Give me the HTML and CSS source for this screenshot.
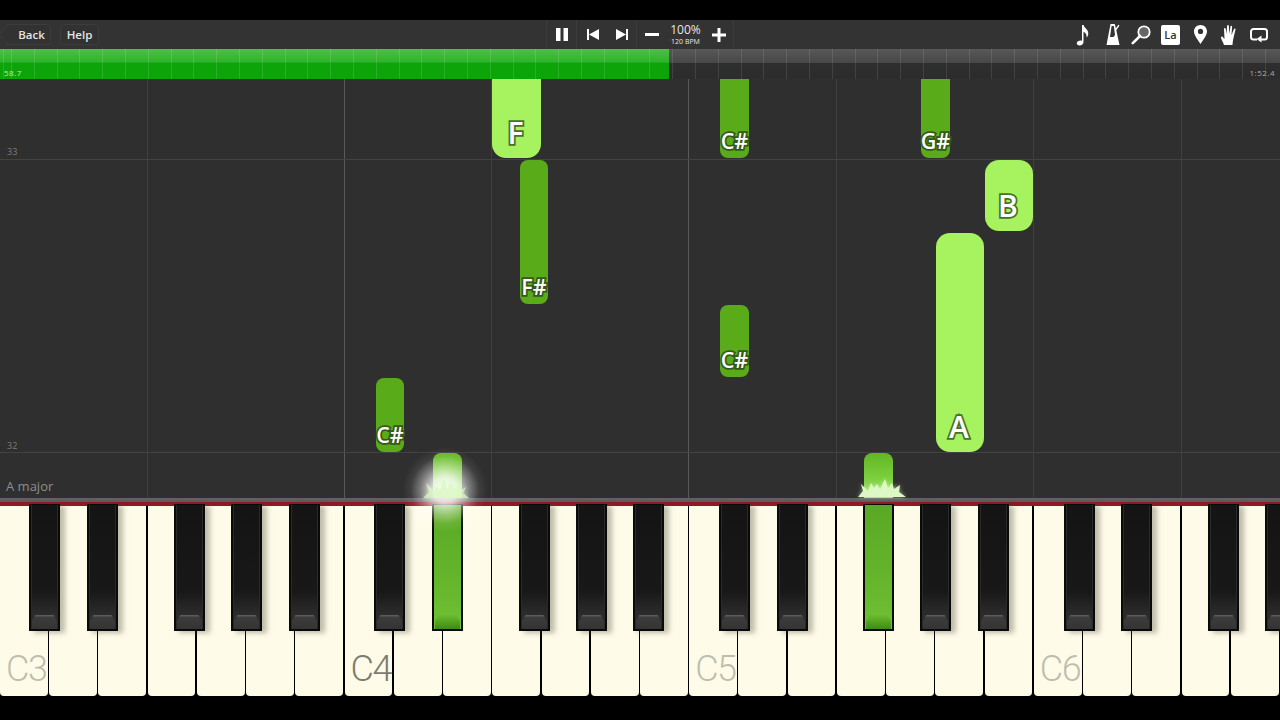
FILE: index.html
```html
<!DOCTYPE html>
<html lang="en">
<head>
<meta charset="utf-8">
<title>Piano roll</title>
<link rel="stylesheet" href="styles.css">
</head>
<body>
<div class="letterbox"></div>
<header class="toolbar">
  <nav class="tb-left">
    <a class="btn btn-back">Back</a>
    <a class="btn">Help</a>
  </nav>
  <div class="tb-center">
    <div class="cell cell-play">
      <svg width="12" height="13" viewBox="0 0 12 13"><path class="ic" d="M0 0h4.500v13H0zM7.500 0H12v13H7.500z"/></svg>
    </div>
    <div class="cell cell-skip">
      <svg width="12" height="11" viewBox="0 0 12 11"><path class="ic" d="M0 0h2v11H0zM12 0v11L2 5.500z"/></svg>
      <svg width="12" height="11" viewBox="0 0 12 11"><path class="ic" d="M10 0h2v11h-2zM0 0v11l10-5.500z"/></svg>
    </div>
    <div class="cell cell-speed">
      <svg width="14" height="3" viewBox="0 0 14 3"><path class="ic" d="M0 0h14v3H0z"/></svg>
      <div class="speed"><span class="pct">100%</span><span class="bpm">120 BPM</span></div>
      <svg width="14" height="14" viewBox="0 0 14 14"><path class="ic" d="M5.500 0h3v5.500H14v3H8.500V14h-3V8.500H0v-3h5.500z"/></svg>
    </div>
  </div>
  <div class="tb-right">
    <svg width="14" height="22" viewBox="0 0 14 22"><path class="ic" d="M6 1h1.600c.3 3 5.400 4.500 4.600 9.500-.3 1.600-1 2.600-1.500 3 .3-3-1.500-5-3.200-5.800V18c0 2.200-2.200 3.600-4.300 3.400C1 21.200.3 19.800 1 18.500c.8-1.500 3-2.300 5-1.700z"/></svg>
    <svg class="i-metro" width="14" height="21" viewBox="0 0 14 21"><path class="ic" d="M4.500 0h4.300l1 4.200L12.500.8l1 .8-3.200 4.700L13.500 21H.5zM5.600 2 4 13h3.500l1.500-2-1.200-9z"/></svg>
    <svg class="i-mag" width="20" height="20" viewBox="0 0 20 20"><circle cx="13" cy="7" r="5.700" fill="#666" stroke="#fff" stroke-width="1.800"/><path d="M9 11 1.800 18.200" stroke="#fff" stroke-width="2.600" stroke-linecap="round"/></svg>
    <span class="la">La</span>
    <svg class="i-pin" width="13" height="19" viewBox="0 0 13 19"><path class="ic" fill-rule="evenodd" d="M6.500 0C10.100 0 13 2.800 13 6.400c0 4-4 8.300-6.500 12.600C4 14.700 0 10.400 0 6.400 0 2.800 2.900 0 6.500 0zm0 3.800a2.600 2.600 0 1 0 0 5.200 2.600 2.600 0 0 0 0-5.200z"/></svg>
    <svg class="i-hand" width="16" height="20" viewBox="0 0 16 20"><path class="ic" d="M3 20c-.6-2.500-3-6-3-7.500 0-1 1-1.200 1.700-.5L3.500 14 3 3.800c0-1.200 1.500-1.200 1.700 0L5.500 9l.6-8c.1-1.300 1.700-1.300 1.800 0L8.200 9l1.300-7.500c.2-1.200 1.700-1 1.600.2L10.500 10l2.500-6c.4-1 1.800-.6 1.500.6L12.500 13c-.6 2.500-.8 4.500-1 7z"/></svg>
    <svg class="i-loop" width="18" height="16" viewBox="0 0 18 16"><path d="M7 12.500H3.500A2.500 2.500 0 0 1 1 10V4.500A2.500 2.500 0 0 1 3.500 2h11A2.500 2.500 0 0 1 17 4.500V10a2.500 2.500 0 0 1-2.500 2.500H10" fill="none" stroke="#fff" stroke-width="2"/><path class="ic" d="M11.500 8.500v7l-5-3.500z"/></svg>
  </div>
</header>
<section class="progress">
  <div class="played"></div>
  <span class="time time-now">58.7</span>
  <span class="time time-total">1:52.4</span>
</section>
<main class="roll">
  <i class="v v1"></i><i class="v v2 strong"></i><i class="v v3"></i><i class="v v4 strong"></i><i class="v v5"></i><i class="v v6"></i><i class="v v7"></i>
  <i class="h h1"></i><i class="h h2"></i>
  <span class="measure m33">33</span>
  <span class="measure m32">32</span>
  <span class="key-sig">A major</span>

  <div class="note light cut n-f"><b>F</b></div>
  <div class="note dark cut n-cs1"><b>C#</b></div>
  <div class="note dark cut n-gs"><b>G#</b></div>
  <div class="note light n-b"><b>B</b></div>
  <div class="note dark n-fs"><b>F#</b></div>
  <div class="note light n-a"><b>A</b></div>
  <div class="note dark n-cs2"><b>C#</b></div>
  <div class="note dark n-cs3"><b>C#</b></div>
  <div class="note playing p1"></div>
  <div class="note playing p2"></div>
</main>
<section class="keyboard">
  <div class="rail"></div>
  <div class="whites">
    <div class="w"><span class="oct pale">C3</span></div><div class="w"></div><div class="w"></div><div class="w"></div><div class="w"></div><div class="w"></div><div class="w"></div>
    <div class="w"><span class="oct">C4</span></div><div class="w"></div><div class="w"></div><div class="w"></div><div class="w"></div><div class="w"></div><div class="w"></div>
    <div class="w"><span class="oct pale">C5</span></div><div class="w"></div><div class="w"></div><div class="w"></div><div class="w"></div><div class="w"></div><div class="w"></div>
    <div class="w"><span class="oct pale">C6</span></div><div class="w"></div><div class="w"></div><div class="w"></div><div class="w"></div>
  </div>
  <div class="b b1"></div><div class="b b2"></div><div class="b b3"></div><div class="b b4"></div><div class="b b5"></div>
  <div class="b b6"></div><div class="b b7 on"></div><div class="b b8"></div><div class="b b9"></div><div class="b b10"></div>
  <div class="b b11"></div><div class="b b12"></div><div class="b b13 on"></div><div class="b b14"></div><div class="b b15"></div>
  <div class="b b16"></div><div class="b b17"></div><div class="b b18"></div><div class="b b19"></div>
</section>
<div class="fx glow"></div>
<svg class="fx spark s1" width="50" height="26" viewBox="0 0 50 26"><path d="M2 25 8 19 5 10 13 18 15 13 19 17 23 4 26 16 30 9 33 16 38 12 39 18 45 14 42 20 48 25z"/></svg>
<svg class="fx spark s2" width="48" height="22" viewBox="0 0 48 22"><path d="M0 21 5 15 3 8 10 15 13 7 16 12 19 8 22 13 27 3 30 12 34 7 36 13 42 9 41 16 48 21z"/></svg>
</body>
</html>
```

FILE: styles.css
```css
* { box-sizing: border-box; }
html, body { margin: 0; height: 720px; overflow: hidden; background: #000; }
body { position: relative; font-family: "Open Sans", "DejaVu Sans", sans-serif; }

.letterbox { height: 20px; background: #000; }

.toolbar {
  height: 29px;
  display: grid;
  grid-template-columns: 1fr auto 1fr;
  background: #333;
  color: #e8e8e8;
}
.tb-left { display: flex; align-items: center; gap: 9px; padding: 4px 0 4px 4px; }
.btn {
  height: 21px;
  width: 39px;
  display: flex;
  align-items: center;
  justify-content: center;
  font-size: 11.500px;
  font-weight: 600;
  color: #e4e4e4;
  border: 1px solid #3c3c3c;
  border-radius: 4px;
  background: #323232;
}
.btn-back { width: 47px; padding-left: 8px; border-left-color: transparent; position: relative; }
.btn-back::before {
  content: "";
  position: absolute;
  left: -4px;
  top: 2px;
  width: 14px;
  height: 14px;
  transform: rotate(45deg);
  border-left: 1px solid #3c3c3c;
  border-bottom: 1px solid #3c3c3c;
}

.tb-center { display: flex; height: 29px; border-left: 1px solid #3c3c3c; }
.cell { display: flex; align-items: center; border-right: 1px solid #3c3c3c; }
.cell-play { width: 30px; padding-left: 9px; }
.cell-skip { width: 60px; padding-left: 10px; gap: 17px; }
.cell-speed { width: 97px; padding-left: 8px; }
.ic { fill: #fff; }
.speed { width: 53px; display: flex; flex-direction: column; align-items: center; color: #e6e6e6; }
.pct { font-size: 12px; line-height: 14px; }
.bpm { font-size: 7px; line-height: 9px; }

.tb-right { display: flex; align-items: center; justify-content: flex-end; padding-right: 12px; }
.i-metro { margin-left: 16px; }
.i-mag { margin-left: 11px; }
.la {
  margin-left: 10px;
  width: 19px;
  height: 20px;
  display: flex;
  align-items: center;
  justify-content: center;
  background: #fff;
  color: #333;
  font-size: 11px;
  font-weight: 600;
  border-radius: 2px;
}
.i-pin { margin-left: 14px; }
.i-hand { margin-left: 14px; }
.i-loop { margin-left: 13px; }

.progress {
  height: 30px;
  position: relative;
  background:
    repeating-linear-gradient(90deg, rgba(255,255,255,.1) 0 1px, transparent 1px 22.8px) 11px 0,
    linear-gradient(#585858 0, #484848 45%, #2e2e2e 48%, #2c2c2c 100%);
}
.played {
  width: 669px;
  height: 30px;
  background:
    repeating-linear-gradient(90deg, rgba(255,255,255,.12) 0 1px, transparent 1px 22.8px) 11px 0,
    linear-gradient(#4cc044 0, #2fb42c 42%, #0da40a 48%, #0da40a 100%);
}
.time { position: absolute; bottom: 1px; font-size: 8px; letter-spacing: .5px; }
.time-now { left: 4px; color: #b9eeb0; }
.time-total { right: 5px; color: #aaa; }

.roll {
  height: 419px;
  position: relative;
  overflow: hidden;
  background: #2f2f2f;
}
.v { position: absolute; top: 0; bottom: 0; width: 1px; background: #3f3f3f; }
.v.strong { background: #5a5a5a; }
.v1 { left: 147px; } .v2 { left: 344px; } .v3 { left: 491px; } .v4 { left: 688px; }
.v5 { left: 836px; } .v6 { left: 1033px; } .v7 { left: 1181px; }
.h { position: absolute; left: 0; right: 0; height: 1px; background: #434343; }
.h1 { top: 80px; } .h2 { top: 373px; }
.measure { position: absolute; left: 7px; font-size: 9px; color: #7c7c7c; }
.m33 { top: 66px; } .m32 { top: 360px; }
.key-sig { position: absolute; left: 6px; top: 398px; font-size: 13px; color: #8d8d8d; }

.note {
  position: absolute;
  display: flex;
  align-items: flex-end;
  justify-content: center;
  border-radius: 8px;
}
.note b {
  font-family: "Open Sans", "DejaVu Sans", sans-serif;
  font-weight: 600;
  color: #fff;
  paint-order: stroke fill;
  -webkit-text-stroke: 3.500px #35591a;
}
.light { background: #a6f25f; border-radius: 14px; }
.light b { font-size: 30px; line-height: 42px; padding: 0 2px 4px 0; -webkit-text-stroke-color: #47702a; }
.dark { background: #5aab19; }
.dark b { font-size: 21.500px; line-height: 30px; padding-bottom: 2px; }
.cut { border-top-left-radius: 0; border-top-right-radius: 0; }

.n-f { left: 492px; top: 0; width: 49px; height: 79px; }
.n-cs1 { left: 720px; top: 0; width: 29px; height: 79px; }
.n-gs { left: 921px; top: 0; width: 29px; height: 79px; }
.n-b { left: 985px; top: 81px; width: 48px; height: 71px; }
.n-fs { left: 520px; top: 81px; width: 28px; height: 144px; }
.n-a { left: 936px; top: 154px; width: 48px; height: 219px; }
.n-cs2 { left: 720px; top: 226px; width: 29px; height: 72px; }
.n-cs3 { left: 376px; top: 299px; width: 28px; height: 74px; }

.playing { top: 374px; width: 29px; height: 45px; background: linear-gradient(#62b624, #7ccf3c 55%, #9ce070); border-radius: 8px 8px 0 0; }
.p1 { left: 433px; }
.p2 { left: 864px; }

.keyboard {
  height: 198px;
  position: relative;
}
.rail { height: 8px; background: linear-gradient(#636363 0, #5a5a5a 4px, #8e1a26 4px, #8e1a26 100%); }
.whites { height: 190px; display: grid; grid-template-columns: repeat(26, 1fr); background: #000; }
.w {
  position: relative;
  margin-right: 1.500px;
  background: #fefce9;
  border-radius: 0 0 4px 4px;
}
.oct {
  position: absolute;
  left: 6px;
  bottom: 6px;
  font-family: Roboto, sans-serif;
  font-size: 36px;
  line-height: 42px;
  font-weight: 300;
  letter-spacing: -1.500px;
  color: #7c7c70;
}
.oct.pale { color: #bebeae; }

.b {
  position: absolute;
  top: 6px;
  width: 31px;
  height: 127px;
  border: 2px solid #0a0a0a;
  border-top-width: 1px;
  background: linear-gradient(#141414 0, #181818 70%, #2c2c2c 88%, #333 100%);
  box-shadow: inset 1px 0 0 #2a2a2a, inset -1px 0 0 #2a2a2a, 5px 2px 5px rgba(70,70,50,.35);
}
.b::after {
  content: "";
  position: absolute;
  left: 1px;
  right: 1px;
  bottom: 0;
  height: 14px;
  clip-path: polygon(14% 0, 86% 0, 100% 45%, 100% 100%, 0 100%, 0 45%);
  background: linear-gradient(#5c5c5c 0, #5c5c5c 1px, #3c3c3c 2px, #343434 100%);
}
.b.on {
  background: linear-gradient(#5aa823 0, #68b92e 75%, #72c234 100%);
  box-shadow: none;
}
.b.on::after { background: linear-gradient(#6cbc30, #4a9a1c 70%, #3f8c14); }
.b1 { left: 29px; } .b2 { left: 87px; } .b3 { left: 174px; } .b4 { left: 231px; } .b5 { left: 289px; }
.b6 { left: 374px; } .b7 { left: 432px; } .b8 { left: 519px; } .b9 { left: 576px; } .b10 { left: 633px; }
.b11 { left: 719px; } .b12 { left: 777px; } .b13 { left: 863px; } .b14 { left: 920px; } .b15 { left: 978px; }
.b16 { left: 1064px; } .b17 { left: 1121px; } .b18 { left: 1208px; } .b19 { left: 1265px; }

.fx { position: absolute; pointer-events: none; }
.glow {
  left: 395px;
  top: 440px;
  width: 100px;
  height: 100px;
  background: radial-gradient(circle closest-side, rgba(255,255,255,.95) 0, rgba(255,255,255,.8) 25%, rgba(255,255,255,.35) 50%, rgba(255,255,255,.08) 68%, transparent 85%);
}
.spark path { fill: #dcf8c4; }
.spark { filter: drop-shadow(0 0 2px rgba(225,255,200,.6)); }
.s1 { left: 421px; top: 473px; opacity: .8; }
.s2 { left: 858px; top: 476px; }
```
